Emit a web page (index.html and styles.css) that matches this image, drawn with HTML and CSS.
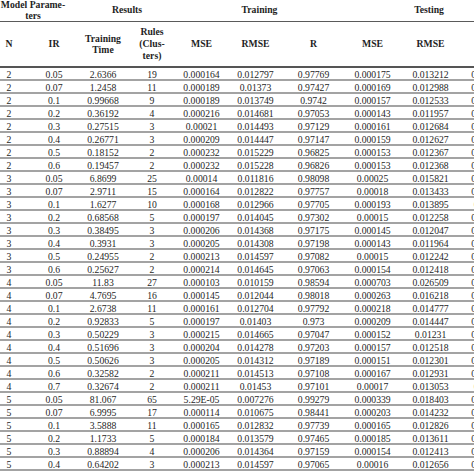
FILE: index.html
```html
<!DOCTYPE html>
<html lang="en">
<head>
<meta charset="utf-8">
<title>Model results table</title>
<link rel="stylesheet" href="styles.css">
</head>
<body>
<table class="results">
  <colgroup>
    <col class="c-n"><col class="c-ir"><col class="c-tt"><col class="c-rules">
    <col class="c-mse"><col class="c-rmse"><col class="c-r">
    <col class="c-tmse"><col class="c-trmse"><col class="c-tr">
  </colgroup>
  <thead>
    <tr class="group-row">
      <th colspan="2">Model Parame-<br>ters</th>
      <th colspan="2">Results</th>
      <th colspan="3">Training</th>
      <th colspan="3">Testing</th>
    </tr>
    <tr class="col-row">
      <th>N</th>
      <th>IR</th>
      <th>Training<br>Time</th>
      <th class="rules">Rules<br>(Clus-<br>ters)</th>
      <th>MSE</th>
      <th>RMSE</th>
      <th>R</th>
      <th>MSE</th>
      <th>RMSE</th>
      <th>R</th>
    </tr>
  </thead>
  <tbody>
    <tr><td>2</td><td>0.05</td><td>2.6366</td><td>19</td><td>0.000164</td><td>0.012797</td><td>0.97769</td><td>0.000175</td><td>0.013212</td><td>0.97656</td></tr>
    <tr><td>2</td><td>0.07</td><td>1.2458</td><td>11</td><td>0.000189</td><td>0.01373</td><td>0.97427</td><td>0.000169</td><td>0.012988</td><td>0.97761</td></tr>
    <tr><td>2</td><td>0.1</td><td>0.99668</td><td>9</td><td>0.000189</td><td>0.013749</td><td>0.9742</td><td>0.000157</td><td>0.012533</td><td>0.97903</td></tr>
    <tr><td>2</td><td>0.2</td><td>0.36192</td><td>4</td><td>0.000216</td><td>0.014681</td><td>0.97053</td><td>0.000143</td><td>0.011957</td><td>0.98085</td></tr>
    <tr><td>2</td><td>0.3</td><td>0.27515</td><td>3</td><td>0.00021</td><td>0.014493</td><td>0.97129</td><td>0.000161</td><td>0.012684</td><td>0.97851</td></tr>
    <tr><td>2</td><td>0.4</td><td>0.26771</td><td>3</td><td>0.000209</td><td>0.014447</td><td>0.97147</td><td>0.000159</td><td>0.012627</td><td>0.97869</td></tr>
    <tr><td>2</td><td>0.5</td><td>0.18152</td><td>2</td><td>0.000232</td><td>0.015229</td><td>0.96825</td><td>0.000153</td><td>0.012367</td><td>0.97958</td></tr>
    <tr><td>2</td><td>0.6</td><td>0.19457</td><td>2</td><td>0.000232</td><td>0.015228</td><td>0.96826</td><td>0.000153</td><td>0.012368</td><td>0.97958</td></tr>
    <tr><td>3</td><td>0.05</td><td>6.8699</td><td>25</td><td>0.00014</td><td>0.011816</td><td>0.98098</td><td>0.00025</td><td>0.015821</td><td>0.96729</td></tr>
    <tr><td>3</td><td>0.07</td><td>2.9711</td><td>15</td><td>0.000164</td><td>0.012822</td><td>0.97757</td><td>0.00018</td><td>0.013433</td><td>0.97587</td></tr>
    <tr><td>3</td><td>0.1</td><td>1.6277</td><td>10</td><td>0.000168</td><td>0.012966</td><td>0.97705</td><td>0.000193</td><td>0.013895</td><td>0.9742</td></tr>
    <tr><td>3</td><td>0.2</td><td>0.68568</td><td>5</td><td>0.000197</td><td>0.014045</td><td>0.97302</td><td>0.00015</td><td>0.012258</td><td>0.97993</td></tr>
    <tr><td>3</td><td>0.3</td><td>0.38495</td><td>3</td><td>0.000206</td><td>0.014368</td><td>0.97175</td><td>0.000145</td><td>0.012047</td><td>0.98062</td></tr>
    <tr><td>3</td><td>0.4</td><td>0.3931</td><td>3</td><td>0.000205</td><td>0.014308</td><td>0.97198</td><td>0.000143</td><td>0.011964</td><td>0.98087</td></tr>
    <tr><td>3</td><td>0.5</td><td>0.24955</td><td>2</td><td>0.000213</td><td>0.014597</td><td>0.97082</td><td>0.00015</td><td>0.012242</td><td>0.97999</td></tr>
    <tr><td>3</td><td>0.6</td><td>0.25627</td><td>2</td><td>0.000214</td><td>0.014645</td><td>0.97063</td><td>0.000154</td><td>0.012418</td><td>0.97941</td></tr>
    <tr><td>4</td><td>0.05</td><td>11.83</td><td>27</td><td>0.000103</td><td>0.010159</td><td>0.98594</td><td>0.000703</td><td>0.026509</td><td>0.91205</td></tr>
    <tr><td>4</td><td>0.07</td><td>4.7695</td><td>16</td><td>0.000145</td><td>0.012044</td><td>0.98018</td><td>0.000263</td><td>0.016218</td><td>0.96562</td></tr>
    <tr><td>4</td><td>0.1</td><td>2.6738</td><td>11</td><td>0.000161</td><td>0.012704</td><td>0.97792</td><td>0.000218</td><td>0.014777</td><td>0.97146</td></tr>
    <tr><td>4</td><td>0.2</td><td>0.92833</td><td>5</td><td>0.000197</td><td>0.01403</td><td>0.973</td><td>0.000209</td><td>0.014447</td><td>0.97269</td></tr>
    <tr><td>4</td><td>0.3</td><td>0.50229</td><td>3</td><td>0.000215</td><td>0.014665</td><td>0.97047</td><td>0.000152</td><td>0.01231</td><td>0.97985</td></tr>
    <tr><td>4</td><td>0.4</td><td>0.51696</td><td>3</td><td>0.000204</td><td>0.014278</td><td>0.97203</td><td>0.000157</td><td>0.012518</td><td>0.97924</td></tr>
    <tr><td>4</td><td>0.5</td><td>0.50626</td><td>3</td><td>0.000205</td><td>0.014312</td><td>0.97189</td><td>0.000151</td><td>0.012301</td><td>0.97986</td></tr>
    <tr><td>4</td><td>0.6</td><td>0.32582</td><td>2</td><td>0.000211</td><td>0.014513</td><td>0.97108</td><td>0.000167</td><td>0.012931</td><td>0.97785</td></tr>
    <tr><td>4</td><td>0.7</td><td>0.32674</td><td>2</td><td>0.000211</td><td>0.01453</td><td>0.97101</td><td>0.00017</td><td>0.013053</td><td>0.9775</td></tr>
    <tr><td>5</td><td>0.05</td><td>81.067</td><td>65</td><td>5.29E-05</td><td>0.007276</td><td>0.99279</td><td>0.000339</td><td>0.018403</td><td>0.95562</td></tr>
    <tr><td>5</td><td>0.07</td><td>6.9995</td><td>17</td><td>0.000114</td><td>0.010675</td><td>0.98441</td><td>0.000203</td><td>0.014232</td><td>0.97335</td></tr>
    <tr><td>5</td><td>0.1</td><td>3.5888</td><td>11</td><td>0.000165</td><td>0.012832</td><td>0.97739</td><td>0.000165</td><td>0.012826</td><td>0.97826</td></tr>
    <tr><td>5</td><td>0.2</td><td>1.1733</td><td>5</td><td>0.000184</td><td>0.013579</td><td>0.97465</td><td>0.000185</td><td>0.013611</td><td>0.97564</td></tr>
    <tr><td>5</td><td>0.3</td><td>0.88894</td><td>4</td><td>0.000206</td><td>0.014364</td><td>0.97159</td><td>0.000154</td><td>0.012413</td><td>0.97934</td></tr>
    <tr><td>5</td><td>0.4</td><td>0.64202</td><td>3</td><td>0.000213</td><td>0.014597</td><td>0.97065</td><td>0.00016</td><td>0.012656</td><td>0.97872</td></tr>
  </tbody>
</table>
</body>
</html>
```

FILE: styles.css
```css
html, body {
  margin: 0;
  padding: 0;
  overflow: hidden;
  background: #ffffff;
}

body {
  font-family: "Liberation Serif", "Times New Roman", serif;
  color: #1e1e1e;
  font-size: 9.7px;
}

.results {
  border-collapse: collapse;
  table-layout: fixed;
  width: 527px;
  margin-left: -12px;
  margin-top: -2px;
}

.c-n { width: 42px; }
.c-ir { width: 48px; }
.c-tt { width: 50px; }
.c-rules { width: 48px; }
.c-mse { width: 51px; }
.c-rmse { width: 57px; }
.c-r { width: 59px; }
.c-tmse { width: 59px; }
.c-trmse { width: 57px; }
.c-tr { width: 56px; }

.results th,
.results td {
  padding: 0;
  text-align: center;
  vertical-align: middle;
  white-space: nowrap;
}

.results th {
  font-weight: bold;
  line-height: 11px;
}

.group-row th {
  height: 23px;
  border-bottom: 1px solid #5a5a5a;
}

.col-row th {
  height: 44px;
  line-height: 11.5px;
  border-bottom: 2px solid #555555;
}

.col-row th.rules {
  line-height: 12px;
}

.results td {
  height: 9px;
  padding-top: 2px;
  line-height: 9px;
  border-bottom: 2px solid #a3a3a3;
}
```
